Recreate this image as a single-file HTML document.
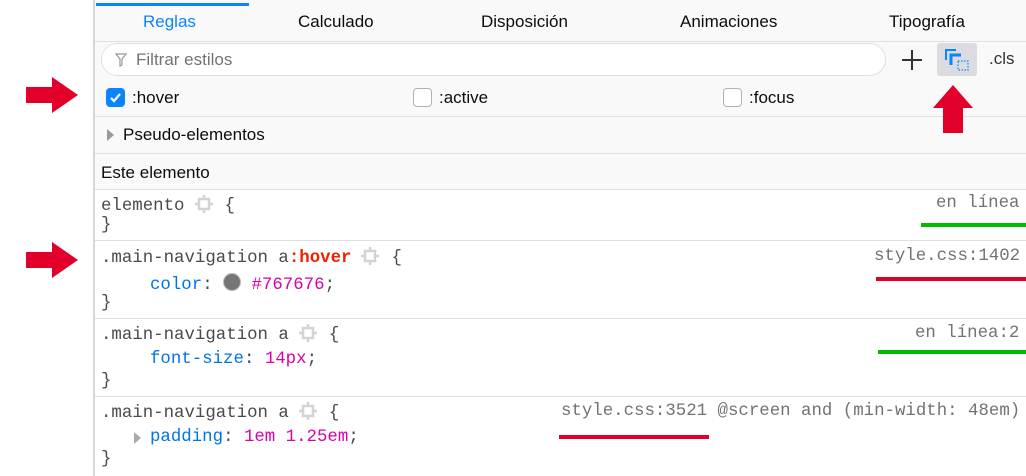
<!DOCTYPE html>
<html><head><meta charset="utf-8"><style>
*{margin:0;padding:0;box-sizing:border-box}
body{width:1026px;height:476px;overflow:hidden;background:#fff;position:relative;font-family:"Liberation Sans",sans-serif;font-size:17px;color:#0c0c0d}
.a{position:absolute}
.hl{position:absolute;left:95px;right:0;height:1px;background:#e0e0e2}
.mono{font-family:"Liberation Mono",monospace;font-size:17.4px;color:#4a4a4f;white-space:pre;position:absolute;line-height:20px}
.t{position:absolute;top:12px;line-height:20px}
.cb{position:absolute;width:19px;height:19px;border:1px solid #b1b1b3;border-radius:4px;background:#fff}
.g{color:#737373}
.p{color:#0074e8}.v{color:#dd00a9}
.u{position:absolute;height:4px}
.ic{display:inline-block;width:18px;height:18px;vertical-align:-3px;margin:0 12px 0 10px}
</style></head><body>
<div class="a" style="left:93px;top:0;width:2px;height:476px;background:#d7d7db"></div>
<div class="a" style="left:95px;top:0;right:0;height:116px;background:#f9f9fa"></div>
<div class="a" style="left:95px;top:117px;right:0;height:72px;background:#f9f9fa"></div>
<div class="a" style="left:96px;top:3px;width:153px;height:3px;background:#0a84ff"></div>
<div class="t" style="left:143px;color:#0a84ff">Reglas</div>
<div class="t" style="left:298px">Calculado</div>
<div class="t" style="left:481px">Disposición</div>
<div class="t" style="left:680px">Animaciones</div>
<div class="t" style="left:889px">Tipografía</div>
<div class="hl" style="top:41px"></div>
<div class="a" style="left:101px;top:43px;width:785px;height:33px;border:1px solid #e0e0e2;border-radius:17px;background:#fff"></div>
<svg class="a" style="left:115px;top:53px" width="12" height="14" viewBox="0 0 12 14"><path d="M1 1h10L7 6v6l-2 1V6z" fill="none" stroke="#999" stroke-width="1.2"/></svg>
<div class="a" style="left:136px;top:50px;color:#737373">Filtrar estilos</div>
<div class="a" style="left:902px;top:50px;width:20px;height:20px"><div class="a" style="left:0;top:9px;width:20px;height:1.5px;background:#333"></div><div class="a" style="left:9px;top:0;width:1.5px;height:20px;background:#333"></div></div>
<div class="a" style="left:937px;top:43px;width:40px;height:33px;background:#dcdce0;border-radius:3px"></div>
<svg class="a" style="left:944px;top:47px" width="28" height="26" viewBox="0 0 28 26"><path d="M2 13V3h10" fill="none" stroke="#0a84ff" stroke-width="2"/><path d="M7 18V8h10" fill="none" stroke="#0a84ff" stroke-width="3"/><rect x="14" y="14" width="10" height="9" fill="none" stroke="#0a84ff" stroke-width="1.2" stroke-dasharray="1.5 1.5"/></svg>
<div class="a" style="left:989px;top:49px;color:#333">.cls</div>
<div class="cb" style="left:106px;top:88px;background:#0a84ff;border-color:#0a84ff"><svg width="17" height="17" viewBox="0 0 17 17"><path d="M4 9l3 3 6-7" fill="none" stroke="#fff" stroke-width="2.2"/></svg></div>
<div class="a" style="left:132px;top:88px">:hover</div>
<div class="cb" style="left:413px;top:88px"></div>
<div class="a" style="left:439px;top:88px">:active</div>
<div class="cb" style="left:723px;top:88px"></div>
<div class="a" style="left:749px;top:88px">:focus</div>
<div class="hl" style="top:116px"></div>
<svg class="a" style="left:106px;top:128px" width="9" height="14"><path d="M1 1l7 6-7 6z" fill="#999"/></svg>
<div class="a" style="left:123px;top:125px">Pseudo-elementos</div>
<div class="hl" style="top:153px"></div>
<div class="a" style="left:101px;top:163px">Este elemento</div>
<div class="hl" style="top:189px"></div>

<div class="mono" style="left:101px;top:195px">elemento<span class="ic"><svg width="18" height="18"><rect x="4" y="4" width="10" height="10" fill="none" stroke="#d4d4d4" stroke-width="2.5"/><path d="M9 0v4M9 14v4M0 9h4M14 9h4" stroke="#d4d4d4" stroke-width="2.5"/></svg></span>{</div>
<div class="mono" style="left:101px;top:216px">}</div>
<div class="mono g" style="left:936px;top:194px">en línea</div>
<div class="u" style="left:921px;top:223px;width:105px;background:#00bb00"></div>
<div class="hl" style="top:240px"></div>

<div class="mono" style="left:101px;top:247px">.main-navigation a<span style="color:#ee2200;font-weight:bold">:hover</span><span class="ic"><svg width="18" height="18"><rect x="4" y="4" width="10" height="10" fill="none" stroke="#d4d4d4" stroke-width="2.5"/><path d="M9 0v4M9 14v4M0 9h4M14 9h4" stroke="#d4d4d4" stroke-width="2.5"/></svg></span>{</div>
<div class="mono" style="left:150px;top:273px"><span class="p">color</span>: <span style="display:inline-block;width:18px;height:18px;border-radius:50%;background:#767676;border:1.5px solid #bbb;vertical-align:-2px"></span> <span class="v">#767676</span>;</div>
<div class="mono" style="left:101px;top:294px">}</div>
<div class="mono g" style="left:874px;top:247px">style.css:1402</div>
<div class="u" style="left:876px;top:277px;width:150px;background:#e2002b"></div>
<div class="hl" style="top:318px"></div>

<div class="mono" style="left:101px;top:324px">.main-navigation a<span class="ic"><svg width="18" height="18"><rect x="4" y="4" width="10" height="10" fill="none" stroke="#d4d4d4" stroke-width="2.5"/><path d="M9 0v4M9 14v4M0 9h4M14 9h4" stroke="#d4d4d4" stroke-width="2.5"/></svg></span>{</div>
<div class="mono" style="left:150px;top:350px"><span class="p">font-size</span>: <span class="v">14px</span>;</div>
<div class="mono" style="left:101px;top:372px">}</div>
<div class="mono g" style="left:915px;top:324px">en línea:2</div>
<div class="u" style="left:878px;top:350px;width:148px;background:#00bb00"></div>
<div class="hl" style="top:396px"></div>

<div class="mono" style="left:101px;top:402px">.main-navigation a<span class="ic"><svg width="18" height="18"><rect x="4" y="4" width="10" height="10" fill="none" stroke="#d4d4d4" stroke-width="2.5"/><path d="M9 0v4M9 14v4M0 9h4M14 9h4" stroke="#d4d4d4" stroke-width="2.5"/></svg></span>{</div>
<svg class="a" style="left:133px;top:431px" width="9" height="14"><path d="M1 1l7 6-7 6z" fill="#aaa"/></svg>
<div class="mono" style="left:150px;top:428px"><span class="p">padding</span>: <span class="v">1em 1.25em</span>;</div>
<div class="mono" style="left:101px;top:450px">}</div>
<div class="mono g" style="left:561px;top:402px">style.css:3521 @screen and (min-width: 48em)</div>
<div class="u" style="left:559px;top:435px;width:150px;background:#e2002b"></div>

<svg class="a" style="left:26px;top:77px" width="52" height="36"><path d="M0 10h26V0l26 18-26 18V26H0z" fill="#e2002b"/></svg>
<svg class="a" style="left:26px;top:242px" width="52" height="36"><path d="M0 10h26V0l26 18-26 18V26H0z" fill="#e2002b"/></svg>
<svg class="a" style="left:933px;top:85px" width="40" height="48"><path d="M20 0l20 23H30v25H10V23H0z" fill="#e2002b"/></svg>
</body></html>
